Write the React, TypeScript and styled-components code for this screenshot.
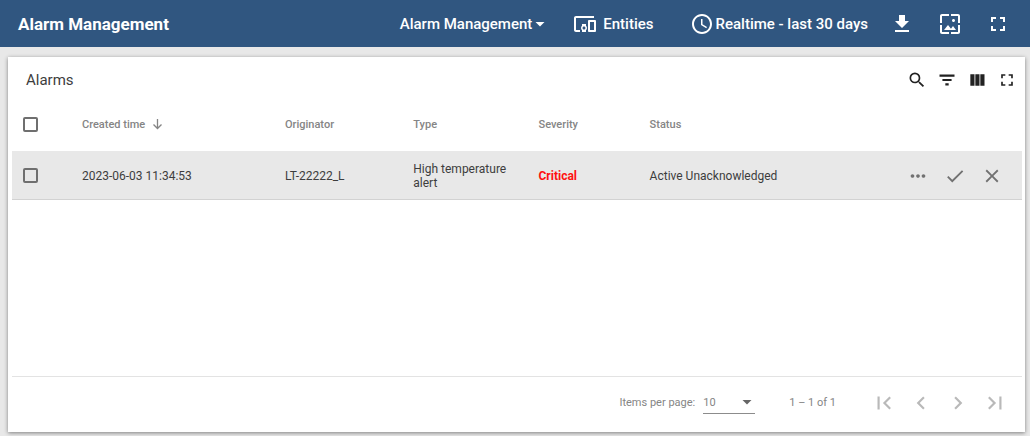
import React from 'react';
import styled, { createGlobalStyle } from 'styled-components';
import {
  MdDevicesOther, MdAccessTime, MdWallpaper, MdFullscreen, MdSearch,
  MdMoreHoriz, MdDone, MdClose, MdFirstPage, MdChevronLeft, MdChevronRight, MdLastPage,
  MdGetApp,
} from 'react-icons/md';

const GlobalStyle = createGlobalStyle`
  * { box-sizing: border-box; }
  body {
    margin: 0;
    background: #e8e8e8;
    font-family: Roboto, "Liberation Sans", sans-serif;
    font-size: 12px;
    color: #3d3d3d;
  }
  button, select, input { font: inherit; color: inherit; margin: 0; }
`;

const Page = styled.div`
  display: flex;
  flex-direction: column;
  min-height: 100vh;
`;

const Toolbar = styled.header`
  display: flex;
  align-items: center;
  height: 47px;
  padding: 0 20px 0 18px;
  background: #305680;
  color: #fff;
  font-size: 15px;
`;

const PageTitle = styled.h1`
  flex: 1;
  margin: 0;
  font-size: 17px;
  font-weight: 700;
`;

const ToolbarButton = styled.button<{ $gap?: number; $space?: number }>`
  display: flex;
  align-items: center;
  gap: ${(p) => p.$gap ?? 0}px;
  height: 24px;
  margin-right: ${(p) => p.$space ?? 0}px;
  padding: 0;
  border: 0;
  background: none;
  font-weight: 500;
  white-space: nowrap;
`;

const ToolbarIcons = styled.div`
  display: flex;
  gap: 24px;
`;

const Main = styled.main`
  display: flex;
  flex: 1;
  padding: 10px 5px 4px 8px;
`;

const Card = styled.section`
  display: flex;
  flex: 1;
  flex-direction: column;
  padding: 0 3px 0 4px;
  background: #fff;
  box-shadow: 0 1px 4px rgba(0, 0, 0, 0.45);
`;

const CardHeader = styled.div`
  display: flex;
  align-items: center;
  justify-content: space-between;
  height: 46px;
  padding: 0 5px 0 14px;
`;

const CardTitle = styled.h2`
  margin: 0;
  font-size: 15px;
  font-weight: 400;
`;

const Actions = styled.div<{ $gap: number }>`
  display: flex;
  align-items: center;
  justify-content: flex-end;
  gap: ${(p) => p.$gap}px;
`;

const IconButton = styled.button<{ $color?: string }>`
  display: flex;
  padding: 0;
  border: 0;
  background: none;
  color: ${(p) => p.$color ?? '#222'};
`;

const Table = styled.table`
  width: 100%;
  table-layout: fixed;
  border-collapse: collapse;
  text-align: left;
`;

const Col = styled.col<{ $width?: string }>`
  width: ${(p) => p.$width ?? 'auto'};
`;

const HeadCell = styled.th`
  height: 48px;
  padding: 0 0 6px;
  color: #858585;
  font-size: 11px;
  font-weight: 500;
`;

const SortLabel = styled.span`
  display: flex;
  align-items: center;
  gap: 7px;
`;

const Row = styled.tr`
  background: #e8e8e8;
  border-bottom: 1px solid #d2d2d2;
`;

const Cell = styled.td`
  height: 48px;
  padding: 2px 16px 0 0;
  line-height: 14px;
`;

const ActionCell = styled(Cell)`
  padding-right: 19px;
`;

const Severity = styled.span`
  color: #f11;
  font-weight: 700;
`;

const Checkbox = styled.input`
  display: block;
  appearance: none;
  width: 15px;
  height: 15px;
  margin-left: 11px;
  border: 2px solid #6f6f6f;
  border-radius: 2px;
`;

const Footer = styled.footer`
  display: flex;
  align-items: center;
  justify-content: flex-end;
  height: 56px;
  margin-top: auto;
  padding: 0 14px 4px 0;
  border-top: 1px solid #e3e3e3;
  color: #858585;
  font-size: 11px;
`;

const SizeField = styled.label`
  display: flex;
  align-items: center;
  gap: 8px;
`;

const SelectBox = styled.span`
  display: grid;
  align-items: center;
  width: 52px;
  height: 22px;
  border-bottom: 1px solid #8c8c8c;

  > * { grid-area: 1 / 1; }
  > svg {
    justify-self: end;
    margin-right: 3px;
    color: #666;
    pointer-events: none;
  }
`;

const Select = styled.select`
  width: 100%;
  padding: 0;
  border: 0;
  background: none;
  appearance: none;
`;

const Range = styled.span`
  margin: 0 35px 0 34px;
`;

const DropArrow = () => (
  <svg width="10" height="20" viewBox="0 0 10 20" fill="currentColor" aria-hidden="true">
    <path d="M.5 8h9l-4.500 4.500z" />
  </svg>
);

const FilterIcon = () => (
  <svg width="20" height="20" viewBox="0 0 24 24" fill="currentColor" aria-hidden="true">
    <path d="M3 5.500h18v2.500H3zM6.500 10.750h11v2.500h-11zM10 16h4v2.500h-4z" />
  </svg>
);

const ColumnsIcon = () => (
  <svg width="20" height="20" viewBox="0 0 24 24" fill="currentColor" aria-hidden="true">
    <path d="M10 19h5V5h-5v14zm-6 0h5V5H4v14zM16 5v14h5V5h-5z" />
  </svg>
);

const SortArrow = () => (
  <svg width="11" height="12" viewBox="0 0 11 12" fill="none" stroke="currentColor" strokeWidth="1.3" aria-hidden="true">
    <path d="M5.500 1v9.500M1.500 6.500l4 4 4-4" />
  </svg>
);

export default function App() {
  return (
    <Page>
      <GlobalStyle />
      <Toolbar>
        <PageTitle>Alarm Management</PageTitle>
        <ToolbarButton $gap={3} $space={28}>Alarm Management<DropArrow /></ToolbarButton>
        <ToolbarButton $gap={6} $space={36}><MdDevicesOther size={24} />Entities</ToolbarButton>
        <ToolbarButton $gap={2} $space={22}><MdAccessTime size={24} />Realtime - last 30 days</ToolbarButton>
        <ToolbarIcons>
          <ToolbarButton aria-label="Download"><MdGetApp size={24} /></ToolbarButton>
          <ToolbarButton aria-label="Background"><MdWallpaper size={24} /></ToolbarButton>
          <ToolbarButton aria-label="Fullscreen"><MdFullscreen size={24} /></ToolbarButton>
        </ToolbarIcons>
      </Toolbar>
      <Main>
        <Card>
          <CardHeader>
            <CardTitle>Alarms</CardTitle>
            <Actions $gap={10}>
              <IconButton aria-label="Search"><MdSearch size={20} /></IconButton>
              <IconButton aria-label="Filter"><FilterIcon /></IconButton>
              <IconButton aria-label="Columns"><ColumnsIcon /></IconButton>
              <IconButton aria-label="Expand"><MdFullscreen size={20} /></IconButton>
            </Actions>
          </CardHeader>
          <Table>
            <colgroup>
              <Col $width="70px" />
              <Col $width="20.1%" />
              <Col $width="12.7%" />
              <Col $width="12.4%" />
              <Col $width="11%" />
              <Col />
              <Col $width="132px" />
            </colgroup>
            <thead>
              <tr>
                <HeadCell><Checkbox type="checkbox" aria-label="Select all" /></HeadCell>
                <HeadCell><SortLabel>Created time<SortArrow /></SortLabel></HeadCell>
                <HeadCell>Originator</HeadCell>
                <HeadCell>Type</HeadCell>
                <HeadCell>Severity</HeadCell>
                <HeadCell>Status</HeadCell>
                <HeadCell />
              </tr>
            </thead>
            <tbody>
              <Row>
                <Cell><Checkbox type="checkbox" aria-label="Select alarm" /></Cell>
                <Cell>2023-06-03 11:34:53</Cell>
                <Cell>LT-22222_L</Cell>
                <Cell>High temperature alert</Cell>
                <Cell><Severity>Critical</Severity></Cell>
                <Cell>Active Unacknowledged</Cell>
                <ActionCell>
                  <Actions $gap={15}>
                    <IconButton $color="#717171" aria-label="Details"><MdMoreHoriz size={22} /></IconButton>
                    <IconButton $color="#717171" aria-label="Acknowledge"><MdDone size={22} /></IconButton>
                    <IconButton $color="#717171" aria-label="Clear"><MdClose size={22} /></IconButton>
                  </Actions>
                </ActionCell>
              </Row>
            </tbody>
          </Table>
          <Footer>
            <SizeField>
              Items per page:
              <SelectBox>
                <Select defaultValue="10"><option>10</option><option>20</option><option>30</option></Select>
                <DropArrow />
              </SelectBox>
            </SizeField>
            <Range>1 – 1 of 1</Range>
            <Actions $gap={11}>
              <IconButton $color="#b9b9b9" aria-label="First page"><MdFirstPage size={26} /></IconButton>
              <IconButton $color="#b9b9b9" aria-label="Previous page"><MdChevronLeft size={26} /></IconButton>
              <IconButton $color="#b9b9b9" aria-label="Next page"><MdChevronRight size={26} /></IconButton>
              <IconButton $color="#b9b9b9" aria-label="Last page"><MdLastPage size={26} /></IconButton>
            </Actions>
          </Footer>
        </Card>
      </Main>
    </Page>
  );
}
